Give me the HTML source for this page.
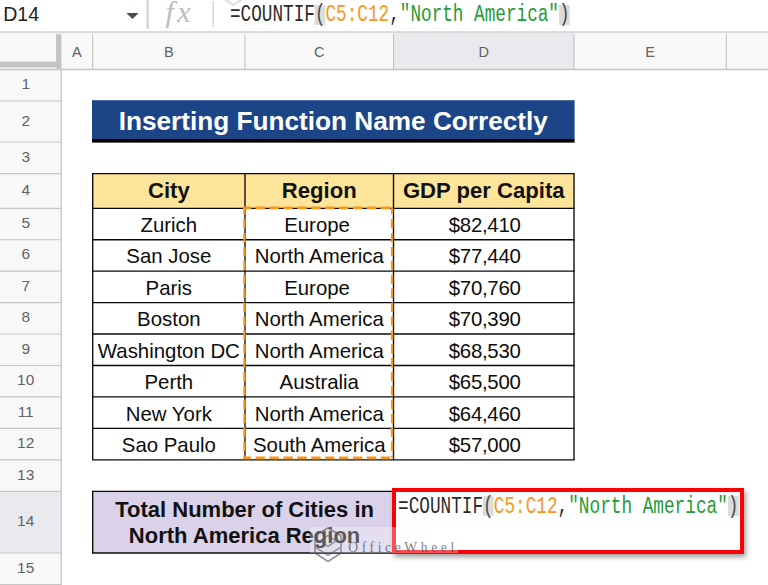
<!DOCTYPE html>
<html lang="en"><head><meta charset="utf-8"><title>Inserting Function Name Correctly</title>
<style>
html,body{margin:0;padding:0;background:#fff;}
body{width:768px;height:585px;overflow:hidden;position:relative;font-family:"Liberation Sans",sans-serif;}
#sheet{position:absolute;left:0;top:0;width:768px;height:585px;overflow:hidden;}
#sheet svg{position:absolute;left:0;top:0;}
.t{position:absolute;display:flex;align-items:center;justify-content:center;text-align:center;white-space:nowrap;box-sizing:border-box;}
.ch{font-size:14.5px;color:#5f6368;padding-top:1.4px;}
.rh{font-size:15.5px;color:#5f6368;padding-bottom:2px;}
.title{font-size:26.2px;font-weight:bold;color:#fff;padding-top:2.5px;}
.th{font-size:22.1px;font-weight:bold;color:#111;padding-top:1px;}
.td{font-size:20.4px;color:#0d0d0d;padding-top:3px;}
.tot{padding-left:3px;padding-top:2px;font-size:22px;font-weight:bold;color:#111;line-height:26.5px;}
.namebox{position:absolute;left:3.2px;top:0.6px;font-size:19.6px;color:#222;line-height:27px;}
.fx{position:absolute;left:165.6px;top:-4.8px;letter-spacing:3.4px;font-family:"Liberation Serif",serif;font-style:italic;font-size:30px;color:#bdbdbd;line-height:34px;}
.mono{position:absolute;font-family:"Liberation Mono",monospace;white-space:pre;transform-origin:0 50%;}
.k{color:#2b2b2b;} .p{color:#4a4a4a;} .o{color:#f7981d;} .g{color:#239c3a;}
.hl{background:linear-gradient(#dcdcdc,#dcdcdc) no-repeat;background-size:100% 20.4px;background-position:0 2.8px;}
#redbox{position:absolute;left:392.2px;top:488.4px;width:352.2px;height:65.2px;box-sizing:border-box;border:4px solid #fb0007;background:#fff;box-shadow:2px 3px 5px rgba(0,0,0,.38);}
#wm{position:absolute;left:310px;top:527px;width:148.4px;height:26.4px;background:rgba(255,255,255,.30);}
#wmt{position:absolute;left:348.3px;top:538px;font-family:"Liberation Serif",serif;font-size:13.6px;letter-spacing:3.6px;color:rgba(85,85,102,.78);line-height:20px;white-space:nowrap;}
</style></head>
<body>
<div id="sheet">
<svg width="768" height="585" viewBox="0 0 768 585">
<rect x="0.00" y="33.00" width="768.00" height="36.50" fill="#f8f8f9" />
<rect x="0.00" y="69.50" width="61.20" height="515.50" fill="#f8f8f9" />
<rect x="393.50" y="33.00" width="180.50" height="36.50" fill="#e8eaed" />
<rect x="0.00" y="491.30" width="61.20" height="61.70" fill="#e8eaed" />
<rect x="0.00" y="31.10" width="768.00" height="2.00" fill="#dadada" />
<line x1="0.00" y1="69.50" x2="768.00" y2="69.50" stroke="#c6c6c6" stroke-width="1.3" />
<line x1="92.70" y1="34.00" x2="92.70" y2="69.50" stroke="#bebebe" stroke-width="1.0" />
<line x1="245.00" y1="34.00" x2="245.00" y2="69.50" stroke="#bebebe" stroke-width="1.0" />
<line x1="393.50" y1="34.00" x2="393.50" y2="69.50" stroke="#bebebe" stroke-width="1.0" />
<line x1="574.00" y1="34.00" x2="574.00" y2="69.50" stroke="#bebebe" stroke-width="1.0" />
<line x1="726.30" y1="34.00" x2="726.30" y2="69.50" stroke="#bebebe" stroke-width="1.0" />
<line x1="61.20" y1="69.50" x2="61.20" y2="585.00" stroke="#c6c6c6" stroke-width="1.3" />
<line x1="0.00" y1="101.00" x2="61.20" y2="101.00" stroke="#c6c6c6" stroke-width="1.15" />
<line x1="0.00" y1="142.00" x2="61.20" y2="142.00" stroke="#c6c6c6" stroke-width="1.15" />
<line x1="0.00" y1="173.60" x2="61.20" y2="173.60" stroke="#c6c6c6" stroke-width="1.15" />
<line x1="0.00" y1="208.40" x2="61.20" y2="208.40" stroke="#c6c6c6" stroke-width="1.15" />
<line x1="0.00" y1="239.70" x2="61.20" y2="239.70" stroke="#c6c6c6" stroke-width="1.15" />
<line x1="0.00" y1="271.10" x2="61.20" y2="271.10" stroke="#c6c6c6" stroke-width="1.15" />
<line x1="0.00" y1="302.60" x2="61.20" y2="302.60" stroke="#c6c6c6" stroke-width="1.15" />
<line x1="0.00" y1="334.00" x2="61.20" y2="334.00" stroke="#c6c6c6" stroke-width="1.15" />
<line x1="0.00" y1="365.50" x2="61.20" y2="365.50" stroke="#c6c6c6" stroke-width="1.15" />
<line x1="0.00" y1="396.90" x2="61.20" y2="396.90" stroke="#c6c6c6" stroke-width="1.15" />
<line x1="0.00" y1="428.40" x2="61.20" y2="428.40" stroke="#c6c6c6" stroke-width="1.15" />
<line x1="0.00" y1="459.80" x2="61.20" y2="459.80" stroke="#c6c6c6" stroke-width="1.15" />
<line x1="0.00" y1="491.30" x2="61.20" y2="491.30" stroke="#c6c6c6" stroke-width="1.15" />
<line x1="0.00" y1="553.00" x2="61.20" y2="553.00" stroke="#c6c6c6" stroke-width="1.15" />
<line x1="0.00" y1="584.50" x2="61.20" y2="584.50" stroke="#c6c6c6" stroke-width="1.15" />
<rect x="56.00" y="34.20" width="5.40" height="34.60" fill="#c4c4c4" />
<rect x="0.00" y="61.60" width="61.40" height="5.80" fill="#c4c4c4" />
<rect x="92.00" y="100.20" width="482.60" height="39.20" fill="#1c4587" />
<rect x="92.00" y="139.00" width="482.60" height="3.60" fill="#000" />
<rect x="92.70" y="173.60" width="481.30" height="34.80" fill="#ffe599" />
<rect x="92.70" y="491.30" width="300.80" height="61.70" fill="#d9d2e9" />
<line x1="92.00" y1="173.60" x2="574.70" y2="173.60" stroke="#0a0a0a" stroke-width="1.35" />
<line x1="92.00" y1="208.40" x2="574.70" y2="208.40" stroke="#0a0a0a" stroke-width="1.35" />
<line x1="92.00" y1="239.70" x2="574.70" y2="239.70" stroke="#0a0a0a" stroke-width="1.35" />
<line x1="92.00" y1="271.10" x2="574.70" y2="271.10" stroke="#0a0a0a" stroke-width="1.35" />
<line x1="92.00" y1="302.60" x2="574.70" y2="302.60" stroke="#0a0a0a" stroke-width="1.35" />
<line x1="92.00" y1="334.00" x2="574.70" y2="334.00" stroke="#0a0a0a" stroke-width="1.35" />
<line x1="92.00" y1="365.50" x2="574.70" y2="365.50" stroke="#0a0a0a" stroke-width="1.35" />
<line x1="92.00" y1="396.90" x2="574.70" y2="396.90" stroke="#0a0a0a" stroke-width="1.35" />
<line x1="92.00" y1="428.40" x2="574.70" y2="428.40" stroke="#0a0a0a" stroke-width="1.35" />
<line x1="92.00" y1="459.80" x2="574.70" y2="459.80" stroke="#0a0a0a" stroke-width="1.35" />
<line x1="92.70" y1="173.60" x2="92.70" y2="459.80" stroke="#0a0a0a" stroke-width="1.35" />
<line x1="245.00" y1="173.60" x2="245.00" y2="459.80" stroke="#0a0a0a" stroke-width="1.35" />
<line x1="393.50" y1="173.60" x2="393.50" y2="459.80" stroke="#0a0a0a" stroke-width="1.35" />
<line x1="574.00" y1="173.60" x2="574.00" y2="459.80" stroke="#0a0a0a" stroke-width="1.35" />
<line x1="92.00" y1="491.30" x2="393.50" y2="491.30" stroke="#0a0a0a" stroke-width="1.35" />
<line x1="92.00" y1="553.00" x2="393.50" y2="553.00" stroke="#0a0a0a" stroke-width="1.35" />
<line x1="92.70" y1="491.30" x2="92.70" y2="553.00" stroke="#0a0a0a" stroke-width="1.35" />
<line x1="243.20" y1="207.90" x2="393.20" y2="207.90" stroke="#f7981d" stroke-width="2.6" stroke-dasharray="9.4 4.5" stroke-dashoffset="1.5"/>
<line x1="243.20" y1="457.80" x2="393.20" y2="457.80" stroke="#f7981d" stroke-width="2.8" stroke-dasharray="9.4 4.5" stroke-dashoffset="1.5"/>
<line x1="244.40" y1="207.90" x2="244.40" y2="457.80" stroke="#f7981d" stroke-width="2.3" stroke-dasharray="9.4 4.5" stroke-dashoffset="2.7"/>
<line x1="392.10" y1="207.90" x2="392.10" y2="457.80" stroke="#f7981d" stroke-width="2.3" stroke-dasharray="9.4 4.5" stroke-dashoffset="2.7"/>
<polygon points="126.3,12.9 138.7,12.9 132.5,19.1" fill="#4a4c54"/>
<rect x="146.50" y="0.00" width="2.20" height="29.00" fill="#d2d2d2" />
<rect x="212.60" y="1.00" width="1.20" height="26.00" fill="#cfcfcf" />
<path d="M224.5 -1 L233.2 5 L242 -1" fill="none" stroke="#e2e2e2" stroke-width="2.6"/>
</svg>
<div class="namebox">D14</div>
<div class="fx">fx</div>
<div class="mono" id="fbar" style="left:230.1px;top:2.2px;font-size:23px;line-height:27px;transform:scaleX(0.7688);"><span class="k">=COUNTIF</span><span class="hl p">(</span><span class="o">C5:C12</span><span class="k">,</span><span class="g">"North America"</span><span class="hl p">)</span></div>
<div class="t ch" style="left:61.20px;top:33.00px;width:31.50px;height:36.50px;">A</div>
<div class="t ch" style="left:92.70px;top:33.00px;width:152.30px;height:36.50px;">B</div>
<div class="t ch" style="left:245.00px;top:33.00px;width:148.50px;height:36.50px;">C</div>
<div class="t ch" style="left:393.50px;top:33.00px;width:180.50px;height:36.50px;">D</div>
<div class="t ch" style="left:574.00px;top:33.00px;width:152.30px;height:36.50px;">E</div>
<div class="t rh" style="left:0.00px;top:69.50px;width:51.40px;height:31.50px;">1</div>
<div class="t rh" style="left:0.00px;top:101.00px;width:51.40px;height:41.00px;">2</div>
<div class="t rh" style="left:0.00px;top:142.00px;width:51.40px;height:31.60px;">3</div>
<div class="t rh" style="left:0.00px;top:173.60px;width:51.40px;height:34.80px;">4</div>
<div class="t rh" style="left:0.00px;top:208.40px;width:51.40px;height:31.30px;">5</div>
<div class="t rh" style="left:0.00px;top:239.70px;width:51.40px;height:31.40px;">6</div>
<div class="t rh" style="left:0.00px;top:271.10px;width:51.40px;height:31.50px;">7</div>
<div class="t rh" style="left:0.00px;top:302.60px;width:51.40px;height:31.40px;">8</div>
<div class="t rh" style="left:0.00px;top:334.00px;width:51.40px;height:31.50px;">9</div>
<div class="t rh" style="left:0.00px;top:365.50px;width:51.40px;height:31.40px;">10</div>
<div class="t rh" style="left:0.00px;top:396.90px;width:51.40px;height:31.50px;">11</div>
<div class="t rh" style="left:0.00px;top:428.40px;width:51.40px;height:31.40px;">12</div>
<div class="t rh" style="left:0.00px;top:459.80px;width:51.40px;height:31.50px;">13</div>
<div class="t rh" style="left:0.00px;top:491.30px;width:51.40px;height:61.70px;">14</div>
<div class="t rh" style="left:0.00px;top:553.00px;width:51.40px;height:32.00px;">15</div>
<div class="t title" style="left:92.00px;top:100.20px;width:482.60px;height:39.20px;">Inserting Function Name Correctly</div>
<div class="t th" style="left:92.70px;top:173.60px;width:152.30px;height:34.80px;">City</div>
<div class="t th" style="left:245.00px;top:173.60px;width:148.50px;height:34.80px;">Region</div>
<div class="t th" style="left:393.50px;top:173.60px;width:180.50px;height:34.80px;">GDP per Capita</div>
<div class="t td" style="left:92.70px;top:208.40px;width:152.30px;height:31.30px;">Zurich</div>
<div class="t td" style="left:245.00px;top:208.40px;width:148.50px;height:31.30px;padding-right:4.4px;">Europe</div>
<div class="t td" style="left:393.50px;top:208.40px;width:180.50px;height:31.30px;letter-spacing:-0.27px;padding-left:1.8px;">$82,410</div>
<div class="t td" style="left:92.70px;top:239.70px;width:152.30px;height:31.40px;">San Jose</div>
<div class="t td" style="left:245.00px;top:239.70px;width:148.50px;height:31.40px;">North America</div>
<div class="t td" style="left:393.50px;top:239.70px;width:180.50px;height:31.40px;letter-spacing:-0.27px;padding-left:1.8px;">$77,440</div>
<div class="t td" style="left:92.70px;top:271.10px;width:152.30px;height:31.50px;">Paris</div>
<div class="t td" style="left:245.00px;top:271.10px;width:148.50px;height:31.50px;padding-right:4.4px;">Europe</div>
<div class="t td" style="left:393.50px;top:271.10px;width:180.50px;height:31.50px;letter-spacing:-0.27px;padding-left:1.8px;">$70,760</div>
<div class="t td" style="left:92.70px;top:302.60px;width:152.30px;height:31.40px;">Boston</div>
<div class="t td" style="left:245.00px;top:302.60px;width:148.50px;height:31.40px;">North America</div>
<div class="t td" style="left:393.50px;top:302.60px;width:180.50px;height:31.40px;letter-spacing:-0.27px;padding-left:1.8px;">$70,390</div>
<div class="t td" style="left:92.70px;top:334.00px;width:152.30px;height:31.50px;">Washington DC</div>
<div class="t td" style="left:245.00px;top:334.00px;width:148.50px;height:31.50px;">North America</div>
<div class="t td" style="left:393.50px;top:334.00px;width:180.50px;height:31.50px;letter-spacing:-0.27px;padding-left:1.8px;">$68,530</div>
<div class="t td" style="left:92.70px;top:365.50px;width:152.30px;height:31.40px;">Perth</div>
<div class="t td" style="left:245.00px;top:365.50px;width:148.50px;height:31.40px;">Australia</div>
<div class="t td" style="left:393.50px;top:365.50px;width:180.50px;height:31.40px;letter-spacing:-0.27px;padding-left:1.8px;">$65,500</div>
<div class="t td" style="left:92.70px;top:396.90px;width:152.30px;height:31.50px;">New York</div>
<div class="t td" style="left:245.00px;top:396.90px;width:148.50px;height:31.50px;">North America</div>
<div class="t td" style="left:393.50px;top:396.90px;width:180.50px;height:31.50px;letter-spacing:-0.27px;padding-left:1.8px;">$64,460</div>
<div class="t td" style="left:92.70px;top:428.40px;width:152.30px;height:31.40px;">Sao Paulo</div>
<div class="t td" style="left:245.00px;top:428.40px;width:148.50px;height:31.40px;">South America</div>
<div class="t td" style="left:393.50px;top:428.40px;width:180.50px;height:31.40px;letter-spacing:-0.27px;padding-left:1.8px;">$57,000</div>
<div class="t tot" style="left:92.70px;top:491.30px;width:300.80px;height:61.70px;">Total Number of Cities in<br>North America Region</div>
<div id="redbox"></div>
<div class="mono" id="fcell" style="left:397.6px;top:493.5px;font-size:23px;line-height:27px;transform:scaleX(0.7707);"><span class="k">=COUNTIF</span><span class="hl p">(</span><span class="o">C5:C12</span><span class="k">,</span><span class="g">"North America"</span><span class="hl p">)</span></div>
<div id="wm"></div>
<svg width="768" height="585" viewBox="0 0 768 585" style="pointer-events:none">
<g fill="none" stroke="rgba(80,80,96,.62)" stroke-width="1.5" stroke-linejoin="round">
<path d="M328 528 L341 535.5 L341 553 L328 561.5 L315 553 L315 535.5 Z"/>
<path d="M316 547.5 L328 555.5 L340 547.5"/>
<path d="M320 541 L328 546.5 L336 541 L328 535.5 Z"/>
</g>
</svg>
<div id="wmt">OfficeWheel</div>
</div>
</body></html>
